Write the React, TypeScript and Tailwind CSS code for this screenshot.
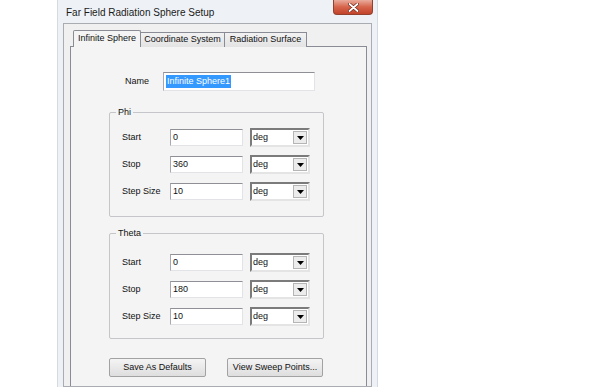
type Row = { label: string; value: string; unit: string };

const PHI: Row[] = [
  { label: 'Start', value: '0', unit: 'deg' },
  { label: 'Stop', value: '360', unit: 'deg' },
  { label: 'Step Size', value: '10', unit: 'deg' },
];

const THETA: Row[] = [
  { label: 'Start', value: '0', unit: 'deg' },
  { label: 'Stop', value: '180', unit: 'deg' },
  { label: 'Step Size', value: '10', unit: 'deg' },
];

function TextBox({ value, className = '' }: { value: string; className?: string }) {
  return (
    <div
      className={`flex items-center bg-white border border-t-[#8f9096] border-l-[#a8a9ae] border-r-[#e2e3e6] border-b-[#e2e3e6] pl-[2px] ${className}`}
    >
      {value}
    </div>
  );
}

function Combo({ unit }: { unit: string }) {
  return (
    <div className="flex items-center justify-between w-[60px] h-[19px] bg-white border-2 border-t-[#7b7b7b] border-l-[#7b7b7b] border-r-[#e4e4e4] border-b-[#e4e4e4] pl-[1px] pr-[1px]">
      <span>{unit}</span>
      <div className="flex items-center justify-center w-[14px] h-[13px] bg-[#ececec] border border-[#b5b5b5]">
        <svg width="7" height="4" viewBox="0 0 7 4">
          <path d="M0 0h7L3.5 4z" fill="#000" />
        </svg>
      </div>
    </div>
  );
}

function Group({ title, rows, height, top }: { title: string; rows: Row[]; height: string; top: string }) {
  return (
    <div className={`relative ml-[38px] w-[215px] ${height} border border-[#c4c6c9] rounded-[2px] ${top} pl-[12px]`}>
      <span className="absolute left-[6px] top-[-7px] px-[2px] bg-[#f4f4f4] leading-[12px]">{title}</span>
      <div className="flex flex-col gap-[8px]">
        {rows.map((r) => (
          <div key={r.label} className="flex items-center h-[19px]">
            <span className="w-[48px]">{r.label}</span>
            <TextBox value={r.value} className="w-[73px] h-[17px]" />
            <div className="ml-[7px]">
              <Combo unit={r.unit} />
            </div>
          </div>
        ))}
      </div>
    </div>
  );
}

function Button({ label, width }: { label: string; width: string }) {
  return (
    <div
      className={`flex items-center justify-center ${width} h-[19px] border border-[#a2a2a2] rounded-[2px] bg-gradient-to-b from-[#f4f4f4] to-[#dedede]`}
    >
      {label}
    </div>
  );
}

export default function App() {
  return (
    <div className="w-[600px] h-[387px] bg-white overflow-hidden font-['Liberation_Sans',Arial,sans-serif] text-[9px] text-[#111]">
      <div className="ml-[57px] w-[321px] h-[387px] flex flex-col bg-[#eef2f6] border-l border-r border-[#d3dae2] px-[5px]">
        {/* title bar */}
        <div className="flex items-start justify-between h-[23px] shrink-0">
          <span className="pl-[3px] pt-[5px] text-[10px] text-[#1b1b1b]">Far Field Radiation Sphere Setup</span>
          <div className="mr-[-1px] flex items-center justify-center w-[40px] h-[15px] rounded-b-[4px] border border-t-0 border-[#93402f] bg-gradient-to-b from-[#e9ab9c] via-[#d6644b] to-[#c2432a]">
            <svg width="11" height="9" viewBox="0 0 11 9">
              <path d="M1.5 1l8 7M9.5 1l-8 7" stroke="#6b2518" strokeWidth="3.2" strokeLinecap="round" />
              <path d="M1.5 1l8 7M9.5 1l-8 7" stroke="#ffffff" strokeWidth="1.8" strokeLinecap="round" />
            </svg>
          </div>
        </div>

        {/* client area */}
        <div className="flex-1 flex flex-col bg-[#f0f0f0] border border-[#a9acb1] pl-[6px] pr-[4px] pt-[6px]">
          {/* tabs */}
          <div className="flex items-end h-[17px] ml-[3px] relative z-10 mb-[-1px]">
            <div className="flex items-center justify-center w-[68px] h-[17px] border border-b-0 border-[#898c95] bg-[#f4f4f4] rounded-t-[2px] pb-[1px]">
              Infinite Sphere
            </div>
            <div className="flex items-center justify-center w-[84px] h-[15px] border border-l-0 border-b-0 border-[#898c95] bg-gradient-to-b from-[#f2f2f2] to-[#e3e3e3]">
              Coordinate System
            </div>
            <div className="flex items-center justify-center w-[82px] h-[15px] border border-l-0 border-b-0 border-[#898c95] bg-gradient-to-b from-[#f2f2f2] to-[#e3e3e3]">
              Radiation Surface
            </div>
          </div>

          {/* tab page */}
          <div className="flex-1 flex flex-col border border-[#898c95] border-b-0 bg-[#f4f4f4]">
            <div className="flex items-center mt-[25px] pl-[54px]">
              <span className="w-[38px]">Name</span>
              <div className="flex items-center w-[152px] h-[19px] bg-white border border-t-[#8f9096] border-l-[#a8a9ae] border-r-[#e2e3e6] border-b-[#e2e3e6] pl-[2px]">
                <span className="bg-[#3399ff] text-white px-[1px]">Infinite Sphere1</span>
              </div>
            </div>

            <Group title="Phi" rows={PHI} height="h-[105px]" top="mt-[21px] pt-[15px]" />
            <Group title="Theta" rows={THETA} height="h-[106px]" top="mt-[16px] pt-[19px]" />

            <div className="flex items-center gap-[21px] ml-[38px] mt-[19px]">
              <Button label="Save As Defaults" width="w-[97px]" />
              <Button label="View Sweep Points..." width="w-[96px]" />
            </div>
          </div>
        </div>
      </div>
    </div>
  );
}
